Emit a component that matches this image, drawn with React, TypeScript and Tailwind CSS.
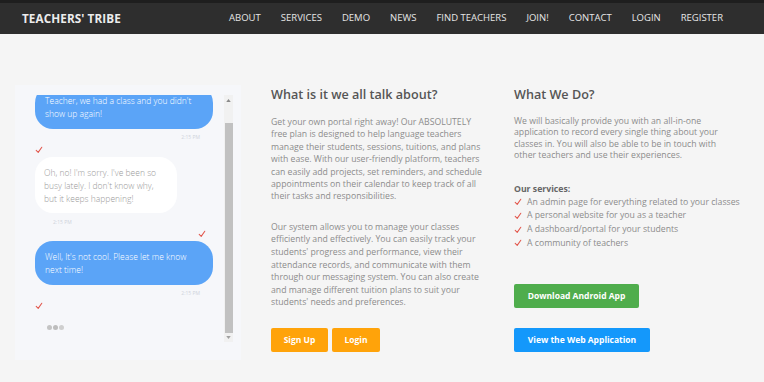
import React from "react";

const navItems = ["About", "Services", "Demo", "News", "Find Teachers", "Join!", "Contact", "Login", "Register"];

const services = [
  "An admin page for everything related to your classes",
  "A personal website for you as a teacher",
  "A dashboard/portal for your students",
  "A community of teachers",
];

const Check = ({ className = "" }: { className?: string }) => (
  <svg viewBox="0 0 10 10" className={`w-[8px] h-[8px] ${className}`}>
    <path d="M1.5 5.5 L4 8 L8.5 1.5" fill="none" stroke="#e2574c" strokeWidth="1.3" strokeLinecap="round" strokeLinejoin="round" />
  </svg>
);

const ChatPanel = () => (
  <div className="w-[226px] bg-[#f6f7fa] flex pl-[20px] pr-[8px] pt-[10px] pb-[18px]">
    <div className="flex-1 h-[247px] overflow-hidden">
      <div className="-mt-[10px] flex flex-col">
        <div className="w-[178px] bg-[#5ba4f7] text-white rounded-[18px] px-[10px] py-[9px] text-[8.5px] leading-[13px] font-light">
          Teacher, we had a class and you didn't
          <br />
          show up again!
        </div>
        <div className="w-[178px] mt-[4px] h-[8px] leading-[8px] text-right pr-[13px] text-[5px] text-[#cfd3da]">2:15 PM</div>
        <div className="mt-[4px] h-[10px] flex items-center">
          <Check />
        </div>
        <div className="w-[142px] mt-[2px] bg-white text-[#9a9a9a] rounded-[18px] pl-[9px] pt-[9px] pb-[8px] text-[8.5px] leading-[13px] font-light">
          Oh, no! I'm sorry. I've been so
          <br />
          busy lately. I don't know why,
          <br />
          but it keeps happening!
        </div>
        <div className="mt-[5px] h-[8px] leading-[8px] pl-[18px] text-[5px] text-[#cfd3da]">2:15 PM</div>
        <div className="w-[178px] mt-[3px] h-[10px] flex items-center justify-end pr-[7px]">
          <Check />
        </div>
        <div className="w-[178px] mt-[2px] bg-[#5ba4f7] text-white rounded-[18px] px-[10px] py-[9px] text-[8.5px] leading-[13px] font-light">
          Well, It's not cool. Please let me know
          <br />
          next time!
        </div>
        <div className="w-[178px] mt-[4px] h-[8px] leading-[8px] text-right pr-[13px] text-[5px] text-[#cfd3da]">2:15 PM</div>
        <div className="mt-[4px] h-[10px] flex items-center">
          <Check />
        </div>
        <div className="mt-[12px] h-[8px] flex items-center gap-[1px] pl-[12px]">
          <span className="w-[5px] h-[5px] rounded-full bg-[#c4c4c4]" />
          <span className="w-[5px] h-[5px] rounded-full bg-[#bdbdbd]" />
          <span className="w-[5px] h-[5px] rounded-full bg-[#cfcfcf]" />
        </div>
      </div>
    </div>
    <div className="w-[9px] h-[247px] bg-[#f1f1f1] flex flex-col items-center">
      <div className="h-[10px] flex items-center justify-center">
        <svg viewBox="0 0 6 4" className="w-[5px] h-[3px]">
          <path d="M0 4 L3 0 L6 4 Z" fill="#8a8a8a" />
        </svg>
      </div>
      <div className="mt-[18px] w-[8px] h-[210px] bg-[#c1c1c1]" />
      <div className="flex-1 flex items-center justify-center">
        <svg viewBox="0 0 6 4" className="w-[5px] h-[3px]">
          <path d="M0 0 L6 0 L3 4 Z" fill="#a0a0a0" />
        </svg>
      </div>
    </div>
  </div>
);

export default function App() {
  return (
    <div className="min-h-screen bg-[#f5f5f5]" style={{ fontFamily: '"Open Sans", "Liberation Sans", sans-serif' }}>
      <header className="h-[34px] bg-[#2e2e2e] border-t-[3px] border-[#1e1e1e] flex items-center justify-between pl-[22px] pr-[41px]">
        <div className="text-[11.7px] font-bold text-[#ececec] tracking-[0.1px]">TEACHERS' TRIBE</div>
        <nav className="flex items-center gap-[20px]">
          {navItems.map((item) => (
            <a key={item} className="text-[9.5px] uppercase text-[#e6e6e6]">
              {item}
            </a>
          ))}
        </nav>
      </header>

      <main className="flex pl-[15px] pt-[51px]">
        <ChatPanel />

        <section className="ml-[30px] w-[243px] pt-[1px]">
          <h2 className="text-[12.6px] leading-[18px] font-semibold text-[#555]">What is it we all talk about?</h2>
          <p className="mt-[12px] text-[8.7px] leading-[12.4px] text-[#8c8c8c]">
            Get your own portal right away! Our ABSOLUTELY
            <br />
            free plan is designed to help language teachers
            <br />
            manage their students, sessions, tuitions, and plans
            <br />
            with ease. With our user-friendly platform, teachers
            <br />
            can easily add projects, set reminders, and schedule
            <br />
            appointments on their calendar to keep track of all
            <br />
            their tasks and responsibilities.
          </p>
          <p className="mt-[18px] text-[8.7px] leading-[12.6px] text-[#8c8c8c]">
            Our system allows you to manage your classes
            <br />
            efficiently and effectively. You can easily track your
            <br />
            students' progress and performance, view their
            <br />
            attendance records, and communicate with them
            <br />
            through our messaging system. You can also create
            <br />
            and manage different tuition plans to suit your
            <br />
            students' needs and preferences.
          </p>
          <div className="mt-[19px] flex gap-[4px]">
            <button className="h-[24px] w-[57px] bg-[#ffa30a] rounded-[2px] text-white text-[8.5px] font-bold">Sign Up</button>
            <button className="h-[24px] w-[48px] bg-[#ffa30a] rounded-[2px] text-white text-[8.5px] font-bold">Login</button>
          </div>
        </section>

        <section className="w-[240px] pt-[1px]">
          <h2 className="text-[12.6px] leading-[18px] font-semibold text-[#555]">What We Do?</h2>
          <p className="mt-[12px] text-[8.7px] leading-[11.4px] text-[#8c8c8c]">
            We will basically provide you with an all-in-one
            <br />
            application to record every single thing about your
            <br />
            classes in. You will also be able to be in touch with
            <br />
            other teachers and use their experiences.
          </p>
          <div className="mt-[22px] text-[8.7px] leading-[11px] font-bold text-[#666]">Our services:</div>
          <ul className="mt-[1px]">
            {services.map((s) => (
              <li key={s} className="flex items-center h-[13.6px] text-[8.7px] text-[#8c8c8c]">
                <Check className="mr-[5px]" />
                {s}
              </li>
            ))}
          </ul>
          <div className="mt-[34px] flex flex-col items-start gap-[20px]">
            <button className="h-[24px] w-[125px] bg-[#4fad4c] rounded-[2px] text-white text-[8.5px] font-bold">Download Android App</button>
            <button className="h-[24px] w-[136px] bg-[#1498fb] rounded-[2px] text-white text-[8.5px] font-bold">View the Web Application</button>
          </div>
        </section>
      </main>
    </div>
  );
}
